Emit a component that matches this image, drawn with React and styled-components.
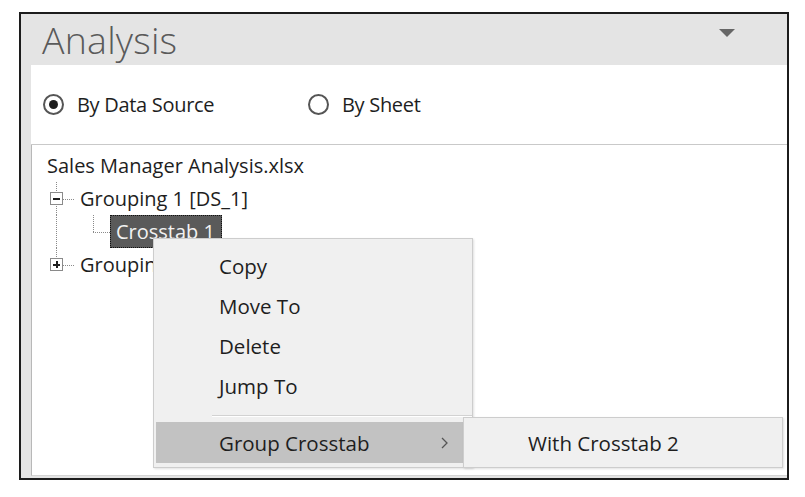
import styled, { createGlobalStyle } from "styled-components";

const GlobalStyle = createGlobalStyle`
	body {
		margin: 0;
		background: #ffffff;
		font-family: "Open Sans", "Noto Sans", sans-serif;
	}
`;

const Page = styled.div`
	padding: 12px 0 0 19px;
`;

const Frame = styled.div`
	position: relative;
	width: 770px;
	height: 468px;
	box-sizing: border-box;
	border: 2px solid #1c1c1c;
	background: #e4e4e4;
	display: flex;
	flex-direction: column;
`;

const Header = styled.div`
	height: 51px;
	flex: none;
	display: flex;
	align-items: center;
	justify-content: space-between;
	padding: 0 52px 0 21px;
`;

const Title = styled.h1`
	margin: 0;
	font-size: 37.5px;
	font-weight: 300;
	color: #5a5a5a;
	letter-spacing: 0.2px;
`;

const Caret = styled.span`
	width: 0;
	height: 0;
	border-left: 8px solid transparent;
	border-right: 8px solid transparent;
	border-top: 8px solid #666;
	margin-top: -14px;
`;

const Body = styled.div`
	flex: 1;
	display: flex;
	flex-direction: column;
	padding: 0 0 2px 10px;
`;

const RadioPanel = styled.div`
	height: 80px;
	box-sizing: border-box;
	flex: none;
	background: #fff;
	border-bottom: 1px solid #c9c9c9;
	display: grid;
	grid-template-columns: 265px auto;
	align-items: center;
	padding: 0 0 0 12px;
`;

const RadioOption = styled.label`
	display: flex;
	align-items: center;
	gap: 13px;
	font-size: 20px;
	color: #1e1e1e;
	letter-spacing: -0.3px;
`;

const RadioDot = styled.span`
	width: 21px;
	height: 21px;
	box-sizing: border-box;
	border-radius: 50%;
	border: 2px solid #555;
	display: flex;
	align-items: center;
	justify-content: center;
	&::after {
		content: "";
		width: 9px;
		height: 9px;
		border-radius: 50%;
		background: ${(p) => (p.$checked ? "#1e1e1e" : "transparent")};
	}
`;

const TreePanel = styled.div`
	flex: 1;
	background: #fff;
	border-left: 1px solid #b8b8b8;
	border-bottom: 1px solid #d4d4d4;
	padding-top: 4px;
`;

const Row = styled.div`
	height: 33px;
	display: flex;
	align-items: center;
	padding-left: ${(p) => p.$indent}px;
	font-size: 20px;
	color: #1e1e1e;
	white-space: nowrap;
`;

const Gutter = styled.span`
	position: relative;
	width: ${(p) => p.$width}px;
	height: 100%;
	flex: none;
	display: flex;
	align-items: center;
	&::before {
		content: "";
		position: absolute;
		left: ${(p) => p.$line}px;
		top: ${(p) => (p.$up ? "0" : "50%")};
		bottom: ${(p) => (p.$down ? "0" : "50%")};
		border-left: 1px dotted #8a8a8a;
		display: ${(p) => (p.$up || p.$down ? "block" : "none")};
	}
	&::after {
		content: "";
		position: absolute;
		left: ${(p) => p.$line}px;
		right: ${(p) => p.$right}px;
		top: 50%;
		border-top: 1px dotted #8a8a8a;
		display: ${(p) => (p.$across ? "block" : "none")};
	}
`;

const ExpandBox = styled.span`
	position: relative;
	z-index: 1;
	margin-left: 6px;
	width: 13px;
	height: 13px;
	box-sizing: border-box;
	border: 1px solid #8a8a8a;
	background: #fff;
	display: flex;
	align-items: center;
	justify-content: center;
	&::before {
		content: "";
		position: absolute;
		width: 7px;
		height: 2px;
		background: #1e1e1e;
	}
	&::after {
		content: "";
		position: absolute;
		width: 2px;
		height: 7px;
		background: #1e1e1e;
		display: ${(p) => (p.$collapsed ? "block" : "none")};
	}
`;

const Label = styled.span`
	margin-left: 4px;
`;

const Selected = styled.span`
	height: 33px;
	box-sizing: border-box;
	display: flex;
	align-items: center;
	padding: 0 6px 0 5px;
	background: #5a5a5a;
	border: 1px dotted #111;
	color: #f2f2f2;
`;

const Menu = styled.div`
	position: absolute;
	left: ${(p) => p.$left}px;
	top: ${(p) => p.$top}px;
	width: 320px;
	box-sizing: border-box;
	background: #f0f0f0;
	border: 1px solid #cdcdcd;
	box-shadow: 1px 1px 2px rgba(0, 0, 0, 0.12);
	padding: ${(p) => p.$pad};
	font-size: 20.5px;
	color: #1e1e1e;
`;

const MenuItem = styled.div`
	height: ${(p) => p.$height}px;
	display: flex;
	align-items: center;
	margin: 0 2px;
	padding: 0 22px 0 ${(p) => p.$text}px;
	background: ${(p) => (p.$active ? "#c2c2c2" : "transparent")};
`;

const Arrow = styled.svg`
	margin-left: auto;
`;

const Separator = styled.div`
	height: 1px;
	margin: 9px 0 6px 58px;
	background: #d2d2d2;
	box-shadow: 0 1px 0 #fff;
`;

export default function App() {
	return (
		<>
			<GlobalStyle />
			<Page>
				<Frame>
					<Header>
						<Title>Analysis</Title>
						<Caret />
					</Header>
					<Body>
						<RadioPanel>
							<RadioOption>
								<RadioDot $checked />
								By Data Source
							</RadioOption>
							<RadioOption>
								<RadioDot />
								By Sheet
							</RadioOption>
						</RadioPanel>
						<TreePanel>
							<Row $indent={15}>Sales Manager Analysis.xlsx</Row>
							<Row $indent={12}>
								<Gutter $width={32} $line={12} $right={2} $up $down $across>
									<ExpandBox />
								</Gutter>
								<Label>Grouping 1 [DS_1]</Label>
							</Row>
							<Row $indent={12}>
								<Gutter $width={32} $line={12} $up $down />
								<Gutter $width={34} $line={17} $right={0} $up $across />
								<Selected>Crosstab 1</Selected>
							</Row>
							<Row $indent={12}>
								<Gutter $width={32} $line={12} $right={2} $up $across>
									<ExpandBox $collapsed />
								</Gutter>
								<Label>Grouping 2 [DS_2]</Label>
							</Row>
						</TreePanel>
					</Body>
					<Menu $left={132} $top={224} $pad="7px 0 4px">
						<MenuItem $height={40} $text={63}>Copy</MenuItem>
						<MenuItem $height={40} $text={63}>Move To</MenuItem>
						<MenuItem $height={40} $text={63}>Delete</MenuItem>
						<MenuItem $height={40} $text={63}>Jump To</MenuItem>
						<Separator />
						<MenuItem $height={41} $text={63} $active>
							Group Crosstab
							<Arrow width="7" height="12" viewBox="0 0 7 12">
								<polyline points="1,1 6,6 1,11" fill="none" stroke="#555" strokeWidth="1.3" />
							</Arrow>
						</MenuItem>
					</Menu>
					<Menu $left={442} $top={403} $pad="4px 0 4px">
						<MenuItem $height={41} $text={62}>With Crosstab 2</MenuItem>
					</Menu>
				</Frame>
			</Page>
		</>
	);
}
